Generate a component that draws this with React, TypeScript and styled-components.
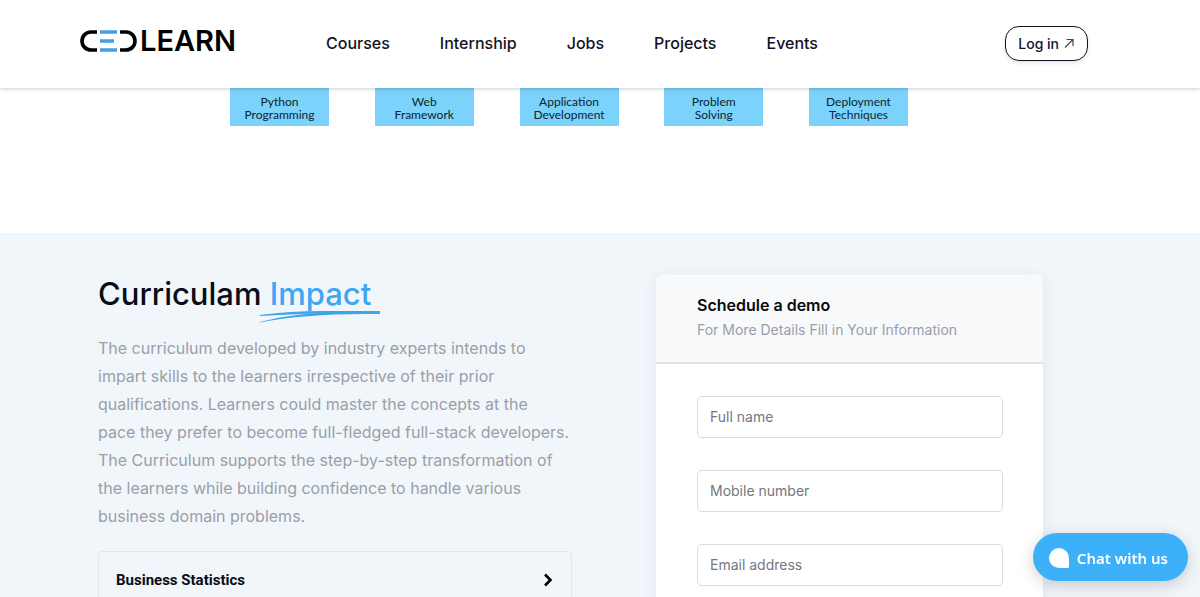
import React from "react";
import styled, { createGlobalStyle } from "styled-components";

const GlobalStyle = createGlobalStyle`
  *, *::before, *::after { box-sizing: border-box; }
  html { scrollbar-width: none; }
  body {
    margin: 0;
    background: #ffffff;
    color: #11131f;
    font-family: Inter, "Liberation Sans", sans-serif;
    font-size: 16px;
  }
  h1, h2, h3, p { margin: 0; }
`;

const Header = styled.header`
  position: sticky;
  top: 0;
  z-index: 2;
  display: flex;
  align-items: center;
  height: 88px;
  padding: 0 112px 2px 80px;
  background: #ffffff;
  box-shadow: 0 1px 4px rgba(0, 0, 0, 0.2);
`;

const Brand = styled.a`
  display: flex;
  align-items: center;
  gap: 2px;
  width: 246px;
  padding-bottom: 4px;
  color: #000000;
  font-size: 29px;
  font-weight: 600;
  line-height: 24px;
  text-decoration: none;
`;

const Nav = styled.nav`
  display: flex;
  flex: 1;
  gap: 50px;
`;

const NavLink = styled.a`
  color: #11131f;
  font-size: 16px;
  font-weight: 500;
  line-height: 24px;
  text-decoration: none;
`;

const LoginButton = styled.button`
  display: flex;
  align-items: center;
  gap: 4px;
  height: 35px;
  padding: 0 12px;
  border: 1px solid #11131f;
  border-radius: 14px;
  background: #ffffff;
  box-shadow: 0 2px 4px rgba(0, 0, 0, 0.1);
  color: #11131f;
  font: 500 14px Inter, sans-serif;
`;

const Topics = styled.ul`
  display: flex;
  justify-content: space-between;
  max-width: 678px;
  margin: 0 auto 107px 230px;
  padding: 0;
  list-style: none;
`;

const Topic = styled.li`
  width: 99px;
  height: 38px;
  padding-top: 7px;
  background: #7bd2fa;
  color: #0c2530;
  font-family: "Century Gothic", "URW Gothic", Lato, sans-serif;
  font-size: 12px;
  line-height: 13px;
  text-align: center;
  white-space: pre-line;
`;

const Section = styled.section`
  display: grid;
  grid-template-columns: minmax(0, 474fr) minmax(0, 387fr);
  align-items: start;
  column-gap: 84px;
  padding: 42px 157px 0 98px;
  background: #f1f6fb;
`;

const Title = styled.h1`
  color: #0a0c18;
  font-size: 31px;
  font-weight: 500;
  line-height: 38px;
`;

const Accent = styled.span`
  position: relative;
  color: #3ea6f2;
`;

const Swoosh = styled.svg`
  position: absolute;
  left: -11px;
  bottom: -11px;
  width: 122px;
  height: 14px;
`;

const Intro = styled.p`
  margin: 21px 0;
  color: #9a9ea8;
  font-size: 16px;
  line-height: 28px;
`;

const AccordionButton = styled.button`
  display: flex;
  align-items: center;
  justify-content: space-between;
  width: 100%;
  height: 58px;
  padding: 0 18px 0 17px;
  border: 1px solid #dfe5ea;
  border-radius: 4px;
  background: transparent;
  color: #0a0c18;
  font: 700 15px Roboto, sans-serif;
`;

const Card = styled.form`
  overflow: hidden;
  border-radius: 6px;
  background: #ffffff;
  box-shadow: 0 4px 16px rgba(30, 60, 90, 0.09);
`;

const CardHeader = styled.div`
  height: 89px;
  padding: 18px 41px 0;
  border-bottom: 2px solid #dfe2e5;
  background: #f8f9fb;
`;

const CardTitle = styled.h2`
  color: #0a0a0c;
  font-size: 16px;
  font-weight: 600;
  line-height: 25px;
`;

const CardHint = styled.p`
  color: #9a9ea8;
  font-size: 14px;
  line-height: 24px;
`;

const Fields = styled.div`
  display: grid;
  gap: 32px;
  padding: 32px 40px 32px 41px;
`;

const Field = styled.input`
  width: 100%;
  height: 42px;
  padding: 0 12px 2px;
  border: 1px solid #d8dadd;
  border-radius: 5px;
  background: #ffffff;
  color: #11131f;
  font: 400 14px Inter, sans-serif;
  &::placeholder { color: #73777f; opacity: 1; }
`;

const ChatButton = styled.button`
  position: fixed;
  right: 12px;
  bottom: 16px;
  z-index: 3;
  display: flex;
  align-items: center;
  gap: 8px;
  height: 48px;
  padding: 2px 20px 0 16px;
  border: 0;
  border-radius: 24px;
  background: #3db0fa;
  box-shadow: 0 4px 16px rgba(0, 0, 0, 0.18);
  color: #ffffff;
  font: 600 15px "Segoe UI", "Noto Sans", sans-serif;
`;

const links = ["Courses", "Internship", "Jobs", "Projects", "Events"];
const topics = [
  "Python\nProgramming",
  "Web\nFramework",
  "Application\nDevelopment",
  "Problem\nSolving",
  "Deployment\nTechniques",
];
const fields = [
  { label: "Full name", type: "text" },
  { label: "Mobile number", type: "tel" },
  { label: "Email address", type: "email" },
];

export default function App() {
  return (
    <>
      <GlobalStyle />
      <Header>
        <Brand href="#" aria-label="CEDLEARN">
          <svg width="58" height="22" viewBox="0 0 58 22" fill="none" strokeWidth="3.6" aria-hidden="true">
            <path d="M17 2H11A9 9 0 0 0 11 20H17" stroke="#000" />
            <path d="M20 2H37M20 11H34M20 20H37" stroke="#459fe5" />
            <path d="M40 2H46A9 9 0 0 1 46 20H40" stroke="#000" />
          </svg>
          LEARN
        </Brand>
        <Nav>
          {links.map((name) => (
            <NavLink key={name} href="#">{name}</NavLink>
          ))}
        </Nav>
        <LoginButton type="button">
          Log in
          <svg width="12" height="12" viewBox="0 0 12 12" fill="none" stroke="#444" strokeWidth="1.2" aria-hidden="true">
            <path d="M2 10.500L10 2.500M3.500 2.500H10V9" />
          </svg>
        </LoginButton>
      </Header>
      <main>
        <Topics>
          {topics.map((name) => (
            <Topic key={name}>{name}</Topic>
          ))}
        </Topics>
        <Section>
          <div>
            <Title>
              Curriculam{" "}
              <Accent>
                Impact
                <Swoosh viewBox="0 0 122 14" preserveAspectRatio="none" fill="#3ea6e8" aria-hidden="true">
                  <path d="M1 6Q32 2 62 2H121V5Q61 3 1 7Z" />
                  <path d="M1 13Q39 3 85 3H121V5Q48 4 1 13.500Z" />
                </Swoosh>
              </Accent>
            </Title>
            <Intro>
              The curriculum developed by industry experts intends to impart skills to the learners
              irrespective of their prior qualifications. Learners could master the concepts at the
              <br />
              pace they prefer to become full-fledged full-stack developers.
              <br />
              The Curriculum supports the step-by-step transformation of
              <br />
              the learners while building confidence to handle various
              <br />
              business domain problems.
            </Intro>
            <AccordionButton type="button" aria-expanded="false">
              Business Statistics
              <svg width="10" height="14" viewBox="0 0 10 14" fill="none" stroke="#000" strokeWidth="2.6" aria-hidden="true">
                <path d="M2 1.500L7.500 7L2 12.500" />
              </svg>
            </AccordionButton>
          </div>
          <Card>
            <CardHeader>
              <CardTitle>Schedule a demo</CardTitle>
              <CardHint>For More Details Fill in Your Information</CardHint>
            </CardHeader>
            <Fields>
              {fields.map(({ label, type }) => (
                <Field key={label} type={type} placeholder={label} aria-label={label} />
              ))}
            </Fields>
          </Card>
        </Section>
      </main>
      <ChatButton type="button">
        <svg width="20" height="20" viewBox="0 0 20 20" fill="#fff" aria-hidden="true">
          <path d="M10 0A10 10 0 0 1 20 10V18.500Q20 20 18.500 20H10A10 10 0 0 1 10 0Z" />
        </svg>
        Chat with us
      </ChatButton>
    </>
  );
}
